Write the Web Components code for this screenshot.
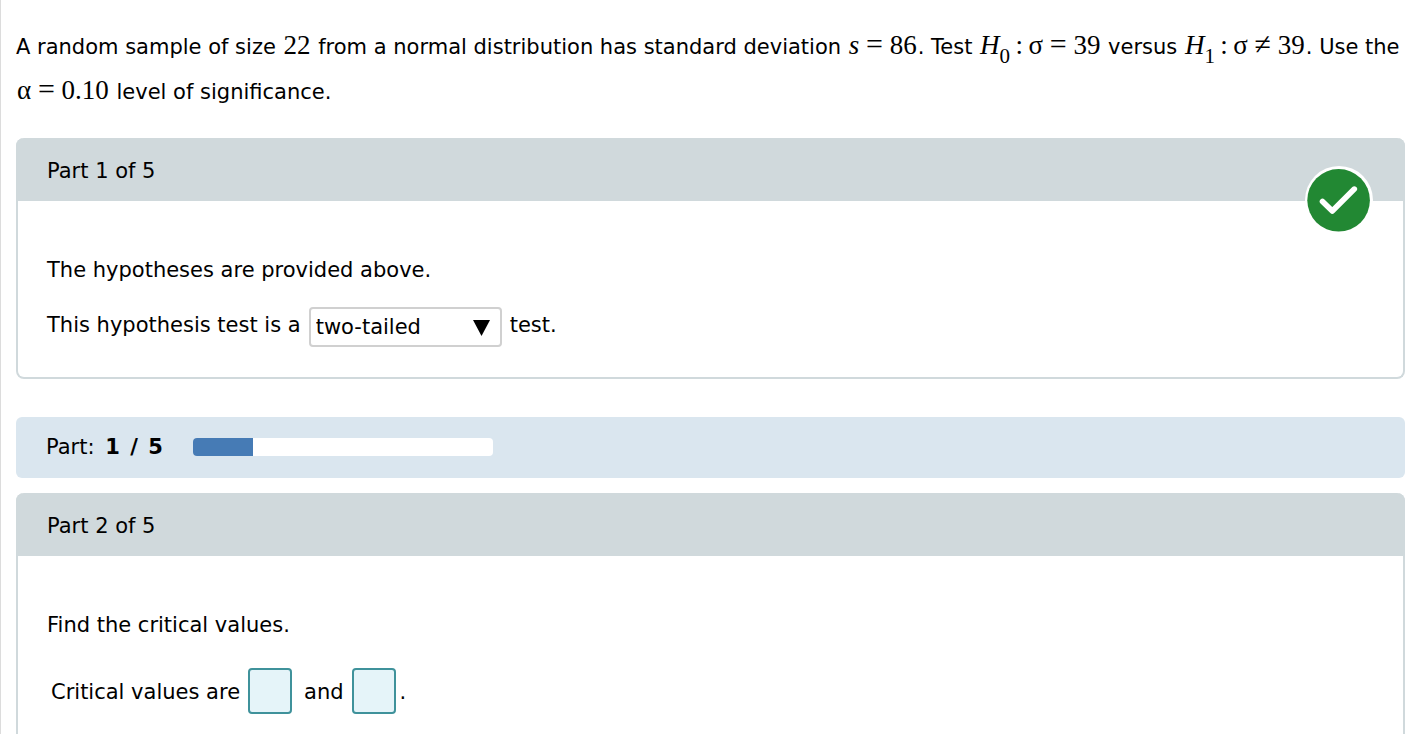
<!DOCTYPE html>
<html lang="en">
<head>
<meta charset="utf-8">
<meta name="viewport" content="width=device-width, initial-scale=1">
<title>Hypothesis test for a standard deviation</title>
<style>
  body{ margin:0; background:#fff; }
</style>
</head>
<body>
<exercise-page>
  <problem-statement>
    A random sample of size <math-text>22</math-text> from a normal distribution has standard deviation
    <math-text><i>s</i> <span>=</span> 86</math-text>. Test
    <math-text><i>H</i><sub>0</sub>&thinsp;:&thinsp;σ <span>=</span> 39</math-text> versus
    <math-text><i>H</i><sub>1</sub>&thinsp;:&thinsp;σ <span>≠</span> 39</math-text>. Use the
    <math-text>α <span>=</span> 0.10</math-text> level of significance.
  </problem-statement>

  <part-card heading="Part 1 of 5" done>
    <p>The hypotheses are provided above.</p>
    <choice-field options="two-tailed,left-tailed,right-tailed">This hypothesis test is a<span slot="after">test.</span></choice-field>
  </part-card>

  <part-progress value="1" max="5"></part-progress>

  <part-card heading="Part 2 of 5">
    <p>Find the critical values.</p>
    <answer-row>
      <answer-box>Critical values are</answer-box>
      <answer-box>and<span slot="after">.</span></answer-box>
    </answer-row>
  </part-card>
</exercise-page>

<script>
const define = (name, html, setup) => {
  const tpl = document.createElement('template')
  tpl.innerHTML = html.trim()
  customElements.define(name, class extends HTMLElement{
    constructor(){
      super()
      this.attachShadow({mode:'open'}).appendChild(tpl.content.cloneNode(true))
    }
    connectedCallback(){
      if (setup) setup(this, (sel)=> this.shadowRoot.querySelector(sel))
    }
  })
}

define('exercise-page', `
  <style>
    :host{
      --bar:#d0d9dc; --line:#d0d9dc; --blue:#467bb5; --green:#228833;
      --font:"DejaVu Sans", Verdana, sans-serif;
      --serif:"Liberation Serif", "Times New Roman", serif;
      display:block; box-sizing:border-box;
      height:100vh; overflow:auto; scrollbar-width:none;
      padding:25px 10px 0 15px;
      border-left:1px solid #dcdcdc;
      font:21px/30px var(--font);
      color:#000;
    }
  </style>
  <main><slot></slot></main>
`)

define('problem-statement', `
  <style>
    :host{ display:block; margin-bottom:23px; line-height:45px; margin-right:-10px; }
  </style>
  <slot></slot>
`)

/* no whitespace round the slot: the element is inline */
define('math-text', `
  <style>
    :host{ margin:0 1px; font-family:var(--serif); font-size:27px; line-height:1; white-space:nowrap; }
    ::slotted(sub){ font-size:21px; line-height:0; vertical-align:-9px; }
    ::slotted(span){ font-size:30px; line-height:0; }
  </style><slot></slot>
`)

define('part-card', `
  <style>
    :host{ display:block; position:relative; }
    section{ border:2px solid var(--line); border-top:0; border-radius:8px; }
    h2{
      margin:0 -2px; padding:18px 31px 15px;
      font:inherit; background:var(--bar);
      border-radius:8px 8px 0 0;
    }
    .body{ padding:54px 29px 30px; }
    ::slotted(p){ margin:0 0 22px; }
    /* badge sits across the header edge */
    svg{ position:absolute; top:28px; right:32px; width:68px; height:68px; }
    :host(:not([done])) svg{ display:none; }
    .disc{ fill:var(--green); }
  </style>
  <section>
    <h2></h2>
    <div class="body"><slot></slot></div>
  </section>
  <svg viewBox="0 0 68 68" role="img" aria-label="Correct">
    <circle cx="34" cy="34" r="34" fill="#fff"/>
    <circle class="disc" cx="33.6" cy="34.3" r="31.3"/>
    <path d="M17.5 35.5l9.8 9.6 22-22" fill="none" stroke="#fff" stroke-width="5.6" stroke-linecap="round" stroke-linejoin="round"/>
  </svg>
`, (el, $) => { $('h2').textContent = el.getAttribute('heading') })

define('choice-field', `
  <style>
    :host{ display:flex; align-items:center; gap:8px; }
    label, ::slotted([slot=after]){ padding-bottom:4px; }
    .box{ position:relative; display:flex; }
    select{
      appearance:none; box-sizing:border-box; width:193px; height:40px;
      margin:0; padding:0 30px 0 5px;
      border:2px solid #d0d0d0; border-radius:4px; background:#fff;
      font:inherit; color:inherit;
    }
    svg{ position:absolute; right:11px; top:13px; width:18px; height:16px; pointer-events:none; }
  </style>
  <label for="choice"><slot></slot></label>
  <span class="box">
    <select id="choice"></select>
    <svg viewBox="0 0 18 16" aria-hidden="true"><path d="M0 0h17L8.5 16z"/></svg>
  </span>
  <slot name="after"></slot>
`, (el, $) => {
  $('select').replaceChildren(...el.getAttribute('options').split(',').map((t)=> new Option(t)))
})

define('part-progress', `
  <style>
    :host{
      display:flex; align-items:center; gap:30px;
      margin:38px 0 15px; padding:15px 30px 16px;
      background:#dae6ef; border-radius:6px;
    }
    b{ margin-left:4px; }
    .slash{ margin:0 3px; }
    .track{ width:300px; height:18px; border-radius:4px; background:#fff; overflow:hidden; }
    .fill{ height:100%; background:var(--blue); }
  </style>
  <span>Part: <b><span class="value"></span> <span class="slash">/</span> <span class="max"></span></b></span>
  <div class="track" role="progressbar" aria-label="Parts completed"><div class="fill"></div></div>
`, (el, $) => {
  const value = el.getAttribute('value'), max = el.getAttribute('max')
  $('.value').textContent = value
  $('.max').textContent = max
  $('.fill').style.width = (value / max * 100) + '%'
  $('.track').setAttribute('aria-valuenow', value)
  $('.track').setAttribute('aria-valuemax', max)
})

define('answer-row', `
  <style>
    :host{ display:flex; gap:12px; padding:6px 4px; }
  </style>
  <slot></slot>
`)

define('answer-box', `
  <style>
    :host{ display:flex; align-items:center; }
    label, ::slotted([slot=after]){ padding-top:2px; }
    input{
      box-sizing:border-box; width:44px; height:46px; margin:0 0 0 8px; padding:0 4px;
      border:2px solid #3f929b; border-radius:4px; background:#e5f4f9;
      font:inherit; text-align:center;
    }
    ::slotted([slot=after]){ margin-left:4px; }
  </style>
  <label for="answer"><slot></slot></label>
  <input id="answer" type="text" autocomplete="off">
  <slot name="after"></slot>
`)
</script>
</body>
</html>
